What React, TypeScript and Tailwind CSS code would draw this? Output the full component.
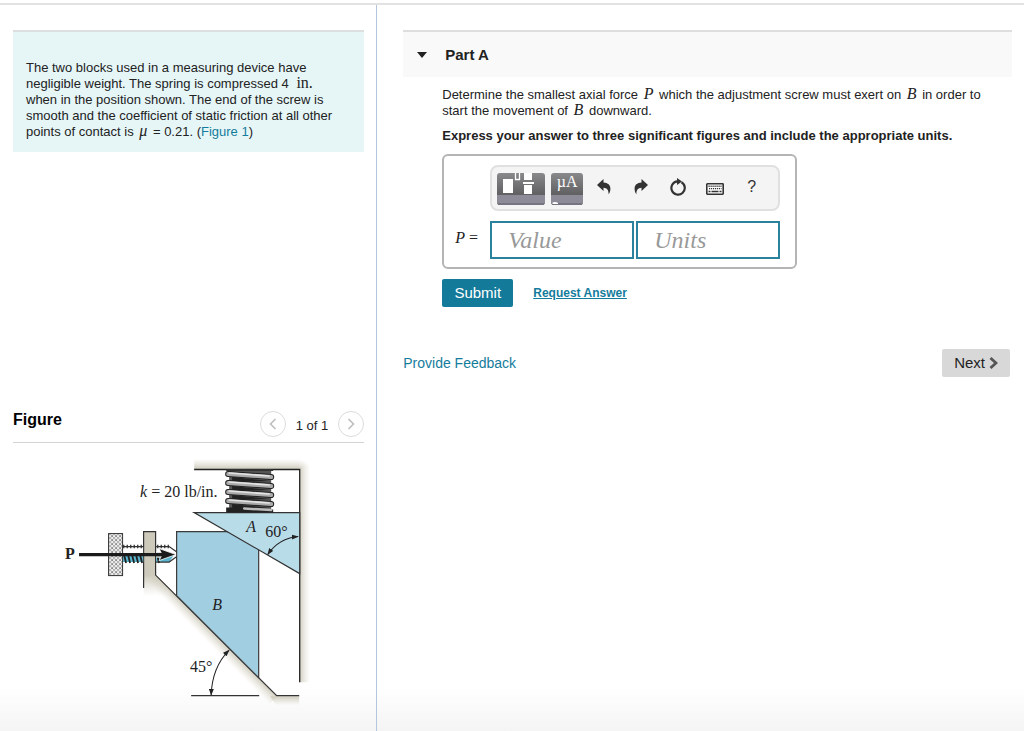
import React, { useState } from "react"

const serif = "font-['Liberation_Serif',serif]"

type mathProps = {
    children: React.ReactNode
}

function MathVar({ children }: mathProps) {
    return <span className={`${serif} italic text-base leading-3 mx-0.5`}>{children}</span>
}

type iconButtonProps = {
    label: string
    onClick?: () => void
    children: React.ReactNode
}

function IconButton({ label, onClick, children }: iconButtonProps) {
    return (
        <button
            type="button"
            aria-label={label}
            onClick={onClick}
            className="w-[37px] h-7 flex items-center justify-center text-[#333]"
        >
            {children}
        </button>
    )
}

function Toolbar({ onReset }: { onReset: () => void }) {
    return (
        <div className="flex items-start h-[46px] pl-[5px] pt-[6px] bg-[#f4f4f4] border-2 border-[#e0e0e0] rounded-lg">
            <button type="button" aria-label="Templates" className="w-12 h-8">
                <svg viewBox="0 0 48 32" className="w-12 h-8">
                    <defs>
                        <linearGradient id="key" x1="0" y1="0" x2="0" y2="1">
                            <stop offset="0" stopColor="#89898b" />
                            <stop offset=".65" stopColor="#626264" />
                        </linearGradient>
                    </defs>
                    <rect width="48" height="32" rx="3" fill="url(#key)" />
                    <path d="M0 22h48v7a3 3 0 0 1-3 3H3a3 3 0 0 1-3-3z" fill="#8d8b98" />
                    <path d="M1 31h46" stroke="#6f6d78" strokeWidth="1.500" />
                    <rect x="6" y="6" width="10" height="14" fill="#fff" />
                    <path d="M18.500 0v6.500h4V0" fill="none" stroke="#fff" strokeWidth="1.300" />
                    <path d="M27 0h8v7h-8zM26 9h11v2H26zM27 12h8v9h-8z" fill="#fff" />
                </svg>
            </button>
            {/* Units and symbols */}
            <button type="button" aria-label="Symbols" className="relative w-8 h-8 ml-[6px] mr-[2px]">
                <svg viewBox="0 0 32 32" className="w-8 h-8">
                    <rect width="32" height="32" rx="3" fill="url(#key)" />
                    <path d="M0 22h32v7a3 3 0 0 1-3 3H3a3 3 0 0 1-3-3z" fill="#8d8b98" />
                    <path d="M1 31h30" stroke="#6f6d78" strokeWidth="1.500" />
                    <path d="M1 30q3-2 6 0v1H2z" fill="#fff" />
                </svg>
                <span className={`${serif} absolute inset-x-0 top-0 text-center text-white text-base leading-[18px]`}>µA</span>
            </button>
            <IconButton label="Undo">
                <svg viewBox="0 0 14 16" className="w-[14px] h-4">
                    <path d="M0 6L6.500 0v3.500C11 3.800 13.500 6 13.400 10c0 2.200-.8 4-1.800 5.200C11.700 11 10 8.800 6.500 8.700V12z" fill="#333" />
                </svg>
            </IconButton>
            <IconButton label="Redo">
                <svg viewBox="0 0 14 16" className="w-[14px] h-4">
                    <path d="M14 6L7.500 0v3.500C3 3.800.5 6 .6 10c0 2.200.8 4 1.800 5.200C2.300 11 4 8.800 7.500 8.700V12z" fill="#333" />
                </svg>
            </IconButton>
            <IconButton label="Reset" onClick={onReset}>
                <svg viewBox="0 0 18 18" className="w-[18px] h-[18px]">
                    <path d="M12.500 4.200A6.700 6.700 0 1 1 8.500 3.300" fill="none" stroke="#333" strokeWidth="2.200" />
                    <path d="M8 0l5 3.600-5 3.400z" fill="#333" />
                </svg>
            </IconButton>
            <IconButton label="Keyboard">
                <svg viewBox="0 0 18 12" className="w-[18px] h-3 mt-[3px]">
                    <rect x=".8" y=".8" width="16.400" height="10.400" rx=".6" fill="#fff" stroke="#333" strokeWidth="1.600" />
                    <path d="M2.500 3.300h13M3 5.600h12.500" stroke="#333" strokeWidth="1.400" strokeDasharray="1.200 .8" />
                    <path d="M2.500 8.500h2M5.500 8.500h7M13.500 8.500h2" stroke="#333" strokeWidth="1.600" />
                </svg>
            </IconButton>
            <IconButton label="Help">
                <span className="text-base leading-none">?</span>
            </IconButton>
        </div>
    )
}

// spring coils between the ceiling and block A
const coils = [474, 483, 492, 501]

function WedgeFigure() {
    return (
        <svg viewBox="13 443 351 288" className="block w-full" role="img" aria-label="Measuring device with blocks A and B">
            <defs>
                <linearGradient id="ceiling" x1="0" y1="0" x2="0" y2="1">
                    <stop offset="0" stopColor="#d9d7c9" stopOpacity="0" />
                    <stop offset="1" stopColor="#cfccbd" />
                </linearGradient>
                <linearGradient id="wall" x1="0" y1="0" x2="1" y2="0">
                    <stop offset="0" stopColor="#cfccbd" />
                    <stop offset="1" stopColor="#e4e2d8" stopOpacity="0" />
                </linearGradient>
                <radialGradient id="corner" cx="0" cy="1" r="1">
                    <stop offset="0" stopColor="#cfccbd" />
                    <stop offset="1" stopColor="#e4e2d8" stopOpacity="0" />
                </radialGradient>
                <linearGradient id="slope" gradientUnits="userSpaceOnUse" x1="215" y1="634" x2="207" y2="642">
                    <stop offset="0" stopColor="#cfccbd" />
                    <stop offset="1" stopColor="#e4e2d8" stopOpacity="0" />
                </linearGradient>
                <linearGradient id="bracket" gradientUnits="userSpaceOnUse" x1="0" y1="575" x2="0" y2="596">
                    <stop offset="0" stopColor="#cdc9bb" />
                    <stop offset="1" stopColor="#dedbd0" stopOpacity="0" />
                </linearGradient>
                <pattern id="knurl" width="4" height="4" patternUnits="userSpaceOnUse">
                    <rect width="4" height="4" fill="#f0f0f0" />
                    <path d="M0 0l4 4M4 0L0 4" stroke="#777" strokeWidth=".7" />
                </pattern>
                <marker id="tip" viewBox="0 0 8 6" refX="7.500" refY="3" markerWidth="7" markerHeight="5" orient="auto-start-reverse">
                    <path d="M0 0l8 3-8 3z" fill="#222" />
                </marker>
            </defs>

            {/* ceiling and right wall */}
            <path d="M194 459h105v10H194z" fill="url(#ceiling)" />
            <path d="M299 469h11v213h-11z" fill="url(#wall)" />
            <path d="M299 459h11v10h-11z" fill="url(#corner)" />
            <path d="M194 469.500H299.500V682" fill="none" stroke="#222" strokeWidth="1.300" />

            {/* slope and floor */}
            <path d="M156 575L277 696l-8 8L146 583z" fill="url(#slope)" />
            <path d="M276 696h23v9h-29z" fill="url(#ceiling)" transform="matrix(1 0 0 -1 0 1401)" />
            <path d="M143.500 531.500h12V575l12 12-2 9h-22z" fill="url(#bracket)" />
            <path d="M143.500 588v-56.500h12V575L276.500 695.500H299" fill="none" stroke="#333" strokeWidth="1.200" />

            {/* block B, then block A over it */}
            <path d="M176.500 531.500h52l30 17V677.500l-82-82z" fill="#a2cee2" stroke="#3a3a3a" strokeWidth="1.200" />
            <path d="M194 512.500h105.500v61z" fill="#b9dce9" stroke="#333" strokeWidth="1.200" />

            {/* spring */}
            <rect x="229" y="470" width="42" height="42" fill="#555" />
            {coils.map((y) => (
                <g key={y}>
                    <path d={`M232 ${y + 3}L270 ${y + 7}L232 ${y + 8}z`} fill="#222" />
                    <path d={`M228 ${y}L271 ${y + 3}`} stroke="#222" strokeWidth="6" strokeLinecap="round" />
                    <path d={`M228 ${y}L271 ${y + 3}`} stroke="#aaa" strokeWidth="4" strokeLinecap="round" />
                    <path d={`M229 ${y - 1}L269 ${y + 2}`} stroke="#e4e4e4" strokeWidth="1.600" strokeLinecap="round" />
                </g>
            ))}
            <path d="M226 507.500h22l25 2v3h-47z" fill="#222" />
            <path d="M244 508.500L271 510" stroke="#bbb" strokeWidth="2.500" strokeLinecap="round" />
            <path d="M226 470h47" stroke="#333" strokeWidth="2" />

            {/* screw */}
            <rect x="122" y="547" width="21" height="15" fill="#fff" />
            <path d="M122 546.500h21M156 546.500h13l7 5" stroke="#333" strokeWidth="1.200" fill="none" />
            <path d="M123 546.500h20M157 546.500h12" stroke="#333" strokeWidth="3.500" strokeDasharray="1.300 2.200" />
            <path d="M122 555h21v7h-21zM156 555h18l-5 7h-13z" fill="#59b6ce" />
            <path d="M124 555l2 8M128 555l2 8M132 555l2 8M136 555l2 8M140 555l2 8M157 555l2 8" stroke="#222" strokeWidth="1.800" />
            <path d="M156 562h13l7-5" stroke="#333" strokeWidth="1.200" fill="none" />
            <rect x="108.500" y="533.500" width="14" height="42" fill="url(#knurl)" stroke="#333" />
            <path d="M156 554.500h7" stroke="#fff" strokeWidth="6" />
            <path d="M79 554.500h84" stroke="#1b1b1b" strokeWidth="3.400" />
            <path d="M159 548.500l17 6-17 6 3-6z" fill="#1b1b1b" stroke="#fff" strokeWidth=".8" />
            <path d="M156 554.500h8" stroke="#1b1b1b" strokeWidth="3.400" />

            {/* angles */}
            <path d="M298 536.500Q279 538 267.500 554.500" fill="none" stroke="#222" markerStart="url(#tip)" markerEnd="url(#tip)" />
            <path d="M229 650Q212 667 211 695" fill="none" stroke="#222" markerStart="url(#tip)" markerEnd="url(#tip)" />
            <path d="M191 695.500h68" stroke="#333" strokeWidth="1.200" />

            <g className={serif} fill="#222" fontSize="16">
                <text x="140" y="497"><tspan fontStyle="italic">k</tspan> = 20 lb/in.</text>
                <text x="246" y="532" fontStyle="italic">A</text>
                <text x="265" y="537">60°</text>
                <text x="212" y="610" fontStyle="italic">B</text>
                <text x="190" y="672">45°</text>
                <text x="65" y="559" fontWeight="bold">P</text>
            </g>
        </svg>
    )
}

function ProblemPanel() {
    return (
        <section className="flex flex-col pl-[13px] pr-3 border-r border-[#b4c6dc]">
            <div className="flex-1 pt-[25px] pb-6">
                <p className="pl-[13px] pr-6 pt-7 pb-3 bg-[#e6f6f7] border-t-2 border-[#dcdfdf] text-[13px] leading-4">
                    The two blocks used in a measuring device have negligible weight. The spring is compressed 4{" "}
                    <span className={`${serif} text-base leading-3 ml-1`}>in.</span> when in the position shown. The end
                    of the screw is smooth and the coefficient of static friction at all other points of contact
                    is <MathVar>μ</MathVar> = 0.21. (<a href="#figure" className="text-[#147c9c]">Figure 1</a>)
                </p>
            </div>

            <div id="figure">
                <div className="flex justify-between h-8 border-b border-[#d4d4d4]">
                    <h2 className="text-base leading-[18px] font-bold text-black">Figure</h2>
                    <div className="flex items-start gap-[10px]">
                        <button type="button" aria-label="Previous figure" className="w-[26px] h-[26px] rounded-full border border-[#dcdcdc] flex items-center justify-center">
                            <svg viewBox="0 0 8 12" className="w-2 h-3"><path d="M6.500 1L1.500 6l5 5" fill="none" stroke="#bbb" strokeWidth="1.500" /></svg>
                        </button>
                        <span className="text-[13px] leading-4 pt-[7px]">1 of 1</span>
                        <button type="button" aria-label="Next figure" className="w-[26px] h-[26px] rounded-full border border-[#dcdcdc] flex items-center justify-center">
                            <svg viewBox="0 0 8 12" className="w-2 h-3"><path d="M1.500 1l5 5-5 5" fill="none" stroke="#bbb" strokeWidth="1.500" /></svg>
                        </button>
                    </div>
                </div>
                <WedgeFigure />
            </div>
        </section>
    )
}

function AnswerPanel() {
    const [value, setvalue] = useState("")
    const [units, setunits] = useState("")

    const handleReset = () => {
        setvalue("")
        setunits("")
    }

    const handleSubmit = (e: React.FormEvent<HTMLFormElement>) => {
        e.preventDefault()
    }

    return (
        <section className="pl-[26px] pr-3 pt-[25px]">
            <button type="button" aria-expanded="true" className="w-full h-[47px] flex items-center gap-[18px] pl-[14px] pt-px bg-[#f9f9f9] border-t-2 border-[#dedede] text-[15px] font-bold">
                <svg viewBox="0 0 10 6" className="w-[10px] h-[6px]"><path d="M0 0h10L5 6z" fill="#222" /></svg>
                Part A
            </button>

            <form onSubmit={handleSubmit} className="pl-[39px] pt-[10px]">
                <p className="pr-4 text-[13px] leading-4">
                    Determine the smallest axial force <MathVar>P</MathVar> which the adjustment screw must exert on{" "}
                    <MathVar>B</MathVar> in order to start the movement of <MathVar>B</MathVar> downward.
                </p>
                <p className="text-[13px] leading-4 font-bold pt-[9px]">
                    Express your answer to three significant figures and include the appropriate units.
                </p>

                <div className="w-fit mt-[10px] pl-[11px] pr-[15px] pt-[9px] pb-2 bg-white border-2 border-[#b4b4b4] rounded-md">
                    <div className="pl-[35px]">
                        <Toolbar onReset={handleReset} />
                    </div>
                    <div className="flex items-center mt-[10px]">
                        <label htmlFor="value" className={`${serif} w-[35px] text-base leading-6 pb-1`}>
                            <span className="italic">P</span> =
                        </label>
                        <input
                            id="value"
                            type="text"
                            placeholder="Value"
                            value={value}
                            onChange={(e) => setvalue(e.target.value)}
                            className={`${serif} w-36 h-[38px] px-4 border-2 border-[#2b829d] text-2xl placeholder:italic placeholder:text-[#999] outline-none`}
                        />
                        <input
                            type="text"
                            aria-label="Units"
                            placeholder="Units"
                            value={units}
                            onChange={(e) => setunits(e.target.value)}
                            className={`${serif} w-36 h-[38px] ml-[2px] px-4 border-2 border-[#2b829d] text-2xl placeholder:italic placeholder:text-[#999] outline-none`}
                        />
                    </div>
                </div>

                <div className="flex items-center gap-5 mt-[10px]">
                    <button type="submit" className="w-[71px] h-7 rounded-xs bg-[#147a99] text-white text-[15px]">Submit</button>
                    <a href="#answer" className="text-[12px] font-bold underline text-[#147c9c]">Request Answer</a>
                </div>
            </form>

            <div className="flex items-center justify-between mt-[42px] pr-[2px]">
                <a href="#feedback" className="text-sm text-[#147c9c]">Provide Feedback</a>
                <button type="button" className="h-7 px-3 flex items-center gap-1 rounded-xs bg-[#d8d8d8] text-[15px] text-[#222]">
                    Next
                    <svg viewBox="0 0 9 12" className="w-[9px] h-3"><path d="M1.500 1l5.500 5-5.500 5" fill="none" stroke="#555" strokeWidth="2.800" /></svg>
                </button>
            </div>
        </section>
    )
}

export default function App() {
    return (
        <main className="min-h-screen flex flex-col pt-[3px] bg-[linear-gradient(to_top,#f4f4f4,#ffffff_44px)] font-['Liberation_Sans',Arial,sans-serif] text-[#222]">
            <div className="h-[2px] bg-[#e2e2e2]"></div>
            <div className="flex-1 grid grid-cols-[7fr_12fr]">
                <ProblemPanel />
                <AnswerPanel />
            </div>
        </main>
    )
}
